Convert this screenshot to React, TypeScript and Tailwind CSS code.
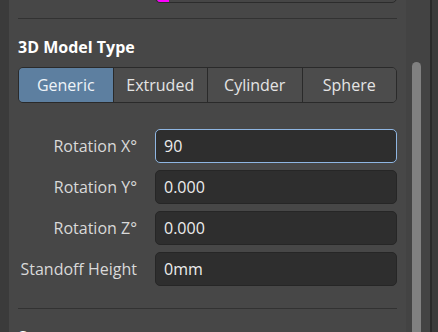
import React from "react";

const segments = ["Generic", "Extruded", "Cylinder", "Sphere"];

const rows = [
  { label: "Rotation X°", value: "90", focused: true },
  { label: "Rotation Y°", value: "0.000" },
  { label: "Rotation Z°", value: "0.000" },
  { label: "Standoff Height", value: "0mm" },
];

const App = () => {
  return (
    <div
      className="flex h-[332px] w-[438px] overflow-hidden bg-[#3b3b3b] text-[#dcdcdc]"
      style={{ fontFamily: '"Open Sans", "Noto Sans", sans-serif' }}
    >
      {/* left gutter */}
      <div className="w-[9px] shrink-0" />

      {/* properties panel */}
      <div className="w-[397px] shrink-0 bg-[#474747] pl-[9px] pr-[9px]">
        {/* field from previous section, scrolled off */}
        <div className="-mt-[31px] ml-[137px] flex h-[34px] items-end rounded-[5px] border border-[#2c2c2c] bg-[#464646] pl-[1px]">
          <div className="h-[5px] w-[12px] rounded-bl-[3px] bg-[#ff00ff]" />
        </div>

        <div className="mt-[15px] h-px bg-[#323232]" />

        <h3 className="mt-[18px] text-[16px] font-bold leading-[20px] text-white">
          3D Model Type
        </h3>

        {/* segmented control */}
        <div className="mt-[10px] flex h-[36px] overflow-hidden rounded-[5px] border border-[#2a2a2a]">
          {segments.map((s, i) => (
            <div
              key={s}
              className={`flex flex-1 items-center justify-center text-[16px] ${
                i === 0 ? "bg-[#5d7fa0] text-[#eef3f8]" : "border-l border-[#2a2a2a] bg-[#4c4c4c] text-[#e4e4e4]"
              }`}
            >
              {s}
            </div>
          ))}
        </div>

        {/* rotation fields */}
        <div className="mt-[26px] flex flex-col gap-[7px]">
          {rows.map((r) => (
            <div key={r.label} className="flex items-center">
              <div className="w-[119px] shrink-0 whitespace-nowrap text-right text-[16px] text-[#d9d9d9]">
                {r.label}
              </div>
              <div
                className={`ml-[18px] flex h-[34px] flex-1 items-center rounded-[5px] border pl-[8px] text-[16px] text-[#ececec] ${
                  r.focused ? "border-[#8fb6e2] bg-[#2e2e2e]" : "border-[#262626] bg-[#2e2e2e]"
                }`}
              >
                {r.value}
              </div>
            </div>
          ))}
        </div>

        <div className="mt-[22px] h-px bg-[#323232]" />

        <h3 className="mt-[18px] text-[16px] font-bold leading-[20px] text-white">
          Source
        </h3>
      </div>

      {/* scrollbar track */}
      <div className="w-[24px] shrink-0 bg-[#434343] pl-[6px] pt-[62px]">
        <div className="h-[300px] w-[9px] rounded-t-full bg-[#808080]" />
      </div>

      <div className="w-[2px] shrink-0 bg-[#2a2a2a]" />
      <div className="flex-1 bg-[#3b3b3b]" />
    </div>
  );
};

export default App;
